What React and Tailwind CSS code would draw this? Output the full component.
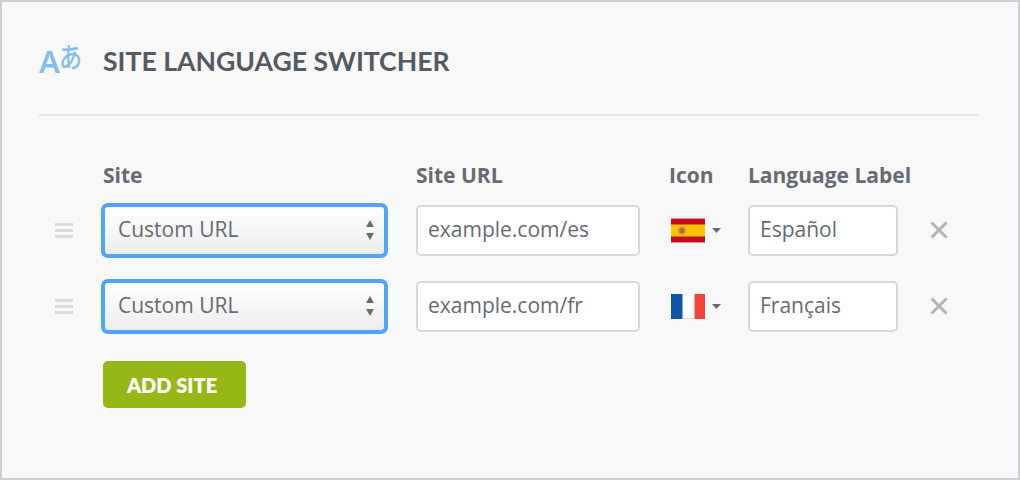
import React from 'react';

const sites = [
  { url: 'example.com/es', label: 'Español', flag: 'es' },
  { url: 'example.com/fr', label: 'Français', flag: 'fr' },
];

const SpainFlag = () => (
  <svg width="34" height="25" viewBox="0 0 34 25" className="block">
    <rect width="34" height="25" fill="#c60b1e" />
    <rect y="0" width="34" height="1" fill="#e58a96" />
    <rect y="24" width="34" height="1" fill="#e58a96" />
    <rect y="6.500" width="34" height="12" fill="#ffc400" />
    <circle cx="11" cy="12.500" r="3.800" fill="#c98a3a" />
    <rect x="9.500" y="10.500" width="3" height="4.500" rx="1" fill="#a8604a" />
  </svg>
);

const FranceFlag = () => (
  <svg width="34" height="25" viewBox="0 0 34 25" className="block">
    <rect width="34" height="25" fill="#ffffff" />
    <rect width="11.500" height="25" fill="#0f55a8" />
    <rect x="23.500" width="10.500" height="25" fill="#f44336" />
    <rect x="11.500" y="24" width="12" height="1" fill="#f0c8d0" />
  </svg>
);

const TranslateIcon = () => (
  <div className="flex items-start w-[41px] h-[32px] mb-[6px] shrink-0 font-['Noto_Sans','Noto_Sans_CJK_JP',sans-serif] text-[#85bdf0]">
    <span className="w-[20px] mt-[-4px] text-[31px] leading-[44px] font-semibold">A</span>
    <span className="mt-[-4px] text-[23px] leading-[36px] font-medium scale-y-[1.22]">あ</span>
  </div>
);

const Row = ({ site }) => (
  <div className="flex items-center h-[52px]">
    <div className="w-[62px] pl-[16px] shrink-0">
      <div className="flex flex-col gap-[3px] w-[18px]">
        <div className="h-[3px] bg-[#dcdcdc]" />
        <div className="h-[3px] bg-[#dcdcdc]" />
        <div className="h-[3px] bg-[#dcdcdc]" />
      </div>
    </div>
    <div className="w-[287px] h-[55px] shrink-0 flex items-center justify-between pl-[13px] pr-[10px] rounded-[7px] border-[4px] border-[#4ea5fb] bg-gradient-to-b from-white to-[#ededed] text-[21px] text-[#666b73]">
      <span>Custom URL</span>
      <span className="flex flex-col gap-[6px] items-center">
        <svg width="8" height="7" viewBox="0 0 9 8"><path d="M4.5 0 9 8H0z" fill="#666b73" /></svg>
        <svg width="8" height="7" viewBox="0 0 9 8"><path d="M0 0h9L4.500 8z" fill="#666b73" /></svg>
      </span>
    </div>
    <div className="w-[224px] h-[51px] ml-[28px] shrink-0 flex items-center pl-[10px] rounded-[5px] border-2 border-[#d6d9dc] bg-white text-[21px] text-[#666b73]">
      {site.url}
    </div>
    <div className="w-[108px] pl-[31px] shrink-0 flex items-center">
      {site.flag === 'es' ? <SpainFlag /> : <FranceFlag />}
      <svg width="9" height="5" viewBox="0 0 9 5" className="ml-[7px]"><path d="M0 0h9L4.500 5z" fill="#666b73" /></svg>
    </div>
    <div className="w-[150px] h-[51px] shrink-0 flex items-center pl-[10px] rounded-[5px] border-2 border-[#d6d9dc] bg-white text-[21px] text-[#666b73]">
      {site.label}
    </div>
    <svg width="18" height="18" viewBox="0 0 18 18" className="ml-[32px]">
      <path d="M1.500 1.500l15 15M16.500 1.500l-15 15" stroke="#b4b4b4" strokeWidth="3" />
    </svg>
  </div>
);

export default function App() {
  return (
    <div className="w-[1020px] h-[480px] border-2 border-[#ccd0d4] bg-[#f8f8f8] pl-[37px] pr-[40px] font-['Open_Sans',sans-serif] overflow-hidden">
      <div className="flex items-center h-[114px] border-b-2 border-[#e3e4e5] pt-[8px]">
        <TranslateIcon />
        <h1 className="ml-[23px] text-[26.600px] font-['Lato',sans-serif] font-bold text-[#545a62]">SITE LANGUAGE SWITCHER</h1>
      </div>
      <div className="flex mt-[45px] text-[21px] leading-[28px] font-bold text-[#666b73]">
        <div className="w-[377px] pl-[64px]">Site</div>
        <div className="w-[253px]">Site URL</div>
        <div className="w-[79px]">Icon</div>
        <div>Language Label</div>
      </div>
      <div className="mt-[15px] flex flex-col gap-[24px]">
        {sites.map((site) => (
          <Row key={site.flag} site={site} />
        ))}
      </div>
      <button className="block ml-[64px] mt-[29px] w-[143px] h-[47px] pr-[5px] rounded-[5px] bg-[#95b816] text-white text-[20px] font-['Lato',sans-serif] font-extrabold">
        ADD SITE
      </button>
    </div>
  );
}
